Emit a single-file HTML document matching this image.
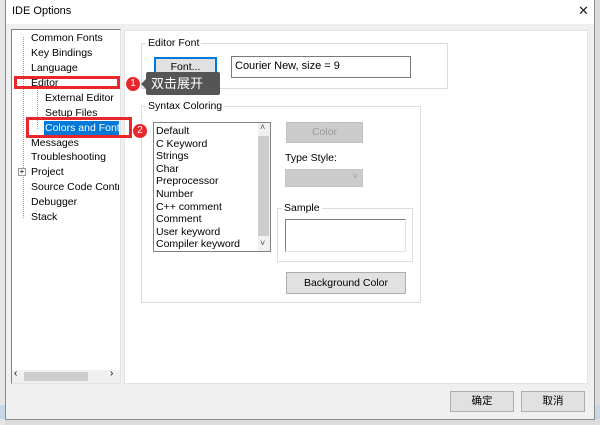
<!DOCTYPE html>
<html><head><meta charset="utf-8"><style>
*{box-sizing:border-box;margin:0;padding:0}
body{width:600px;height:425px;overflow:hidden;background:#dcdcdc;font-family:"Liberation Sans","Noto Sans CJK SC",sans-serif;font-size:10.5px;color:#000;position:relative}
.a{position:absolute}
.win{left:5px;top:0;width:590px;height:420px;background:#f0f0f0;border:1px solid #8a8a8a;border-top:none}
.title{left:0;top:0;width:588px;height:24px;background:#fff}
.grp{border:1px solid #dcdcdc}
.lbl{background:#fff;padding:0 2px}
.btn{background:#e1e1e1;border:1px solid #adadad;text-align:center}
.ti{position:absolute;white-space:nowrap}
</style></head><body>
<div class="a" style="left:0;top:0;width:5px;height:425px;background:#e6e6e6"></div>
<div class="a" style="left:0;top:405px;width:600px;height:14px;background:#c9d6e6"></div>
<div class="a win">
  <div class="a title"></div>
  <div class="a" style="left:6px;top:5px;font-size:11px">IDE Options</div>
  <div class="a" style="left:572px;top:3px;font-size:13px;color:#222">✕</div>
</div>
<!-- left tree -->
<div class="a" style="left:11px;top:29px;width:110px;height:355px;background:#fff;border:1px solid #828282;border-right-color:#e3e3e3;border-bottom-color:#e3e3e3"></div>
<div class="a" style="left:12px;top:370px;width:108px;height:13px;background:#f0f0f0"></div>
<div class="a" style="left:24px;top:372px;width:64px;height:9px;background:#cdcdcd"></div>
<div class="a" style="left:14px;top:368px;font-size:10px">‹</div>
<div class="a" style="left:110px;top:368px;font-size:10px">›</div>
<div class="a" style="left:12px;top:30px;width:107px;height:340px;overflow:hidden">
<div class="a" style="left:11px;top:7px;width:0;height:181px;border-left:1px dotted #a0a0a0"></div>
<div class="a" style="left:25px;top:60px;width:0;height:39px;border-left:1px dotted #a0a0a0"></div>
<div class="ti" style="left:19px;top:2px">Common Fonts</div>
<div class="ti" style="left:19px;top:17px">Key Bindings</div>
<div class="ti" style="left:19px;top:32px">Language</div>
<div class="ti" style="left:19px;top:47px">Editor</div>
<div class="ti" style="left:33px;top:62px">External Editor</div>
<div class="ti" style="left:33px;top:77px">Setup Files</div>
<div class="ti" style="left:32px;top:91px;background:#0078d7;color:#fff;padding:1px 1px">Colors and Fonts</div>
<div class="ti" style="left:19px;top:107px">Messages</div>
<div class="ti" style="left:19px;top:121px">Troubleshooting</div>
<div class="ti" style="left:19px;top:136px">Project</div>
<div class="ti" style="left:19px;top:151px">Source Code Contrc</div>
<div class="ti" style="left:19px;top:166px">Debugger</div>
<div class="ti" style="left:19px;top:181px">Stack</div>
<div class="a" style="left:6px;top:138px;width:8px;height:8px;border:1px solid #999;background:#fff;font-size:8px;line-height:6px;text-align:center">+</div>
</div>
<!-- right panel -->
<div class="a" style="left:124px;top:30px;width:464px;height:354px;background:#fff;border:1px solid #e3e3e3"></div>
<div class="a grp" style="left:141px;top:43px;width:307px;height:46px"></div>
<div class="a lbl" style="left:146px;top:37px">Editor Font</div>
<div class="a btn" style="left:154px;top:57px;width:63px;height:21px;border:2px solid #0078d7;line-height:17px">Font...</div>
<div class="a" style="left:231px;top:56px;width:180px;height:22px;border:1px solid #7a7a7a;padding:3px 3px;font-size:11px">Courier New, size = 9</div>
<div class="a grp" style="left:141px;top:106px;width:280px;height:197px"></div>
<div class="a lbl" style="left:146px;top:100px">Syntax Coloring</div>
<div class="a" style="left:153px;top:122px;width:118px;height:130px;border:1px solid #828282;background:#fff"></div>
<div class="a" style="left:258px;top:123px;width:12px;height:128px;background:#f0f0f0"></div>
<div class="a" style="left:258px;top:136px;width:11px;height:100px;background:#cdcdcd"></div>
<div class="a" style="left:260px;top:122px;font-size:9px;color:#555">˄</div>
<div class="a" style="left:260px;top:238px;font-size:9px;color:#555">˅</div>
<div class="a" style="left:156px;top:125px;line-height:12.6px">Default<br>C Keyword<br>Strings<br>Char<br>Preprocessor<br>Number<br>C++ comment<br>Comment<br>User keyword<br>Compiler keyword</div>
<div class="a" style="left:286px;top:122px;width:77px;height:21px;background:#cccccc;border:1px solid #c0c0c0;color:#9a9a9a;text-align:center;line-height:19px">Color</div>
<div class="a" style="left:285px;top:152px">Type Style:</div>
<div class="a" style="left:285px;top:169px;width:78px;height:18px;background:#cccccc;border:1px solid #c6c6c6"></div>
<div class="a" style="left:353px;top:172px;font-size:8px;color:#999">˅</div>
<div class="a grp" style="left:277px;top:208px;width:136px;height:54px"></div>
<div class="a lbl" style="left:282px;top:202px">Sample</div>
<div class="a" style="left:285px;top:219px;width:121px;height:33px;border:1px solid #828282;border-right-color:#e3e3e3;border-bottom-color:#e3e3e3"></div>
<div class="a btn" style="left:286px;top:272px;width:120px;height:22px;line-height:20px">Background Color</div>
<!-- bottom buttons -->
<div class="a btn" style="left:450px;top:391px;width:64px;height:21px;line-height:19px">确定</div>
<div class="a btn" style="left:521px;top:391px;width:64px;height:21px;line-height:19px">取消</div>
<!-- annotations -->
<div class="a" style="left:14px;top:76px;width:106px;height:13px;border:3px solid #e8262b"></div>
<div class="a" style="left:26px;top:117px;width:106px;height:21px;border:3px solid #e8262b"></div>
<div class="a" style="left:126px;top:77px;width:14px;height:14px;border-radius:50%;background:#e8262b;color:#fff;font-size:10px;text-align:center;line-height:14px">1</div>
<div class="a" style="left:133px;top:124px;width:14px;height:14px;border-radius:50%;background:#e8262b;color:#fff;font-size:10px;text-align:center;line-height:14px">2</div>
<div class="a" style="left:146px;top:72px;width:74px;height:23px;background:#555;border-radius:2px;color:#fff;font-size:13px;line-height:23px;padding-left:5px">双击展开</div>
<div class="a" style="left:141px;top:79px;width:0;height:0;border:5px solid transparent;border-right-color:#555;border-left:none"></div>
</body></html>
